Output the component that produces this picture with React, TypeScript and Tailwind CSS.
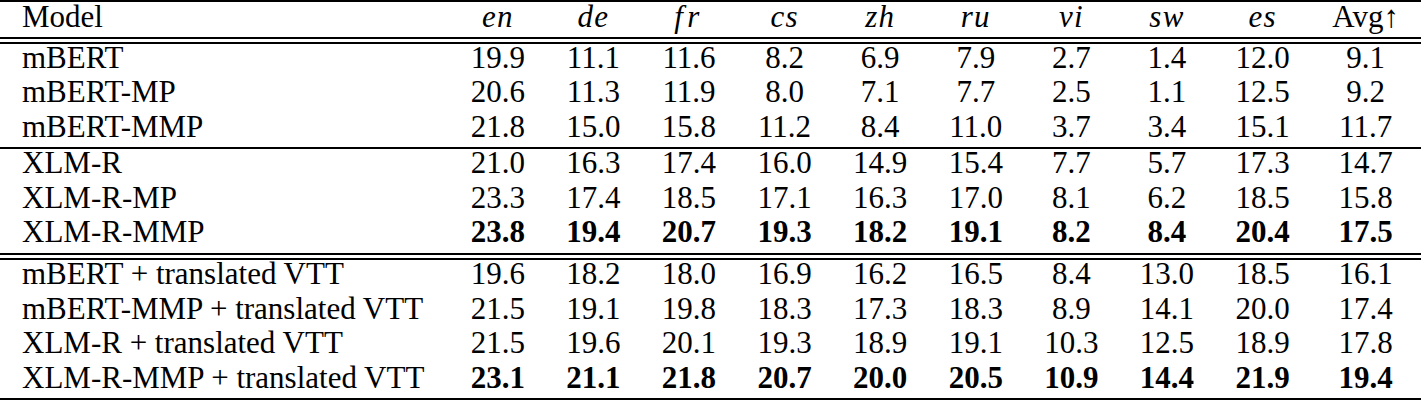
const langs = ["en", "de", "fr", "cs", "zh", "ru", "vi", "sw", "es"];

type Row = { name: string; vals: string[]; bold?: boolean };

const groups: Row[][] = [
  [
    { name: "mBERT", vals: ["19.9", "11.1", "11.6", "8.2", "6.9", "7.9", "2.7", "1.4", "12.0", "9.1"] },
    { name: "mBERT-MP", vals: ["20.6", "11.3", "11.9", "8.0", "7.1", "7.7", "2.5", "1.1", "12.5", "9.2"] },
    { name: "mBERT-MMP", vals: ["21.8", "15.0", "15.8", "11.2", "8.4", "11.0", "3.7", "3.4", "15.1", "11.7"] },
  ],
  [
    { name: "XLM-R", vals: ["21.0", "16.3", "17.4", "16.0", "14.9", "15.4", "7.7", "5.7", "17.3", "14.7"] },
    { name: "XLM-R-MP", vals: ["23.3", "17.4", "18.5", "17.1", "16.3", "17.0", "8.1", "6.2", "18.5", "15.8"] },
    { name: "XLM-R-MMP", vals: ["23.8", "19.4", "20.7", "19.3", "18.2", "19.1", "8.2", "8.4", "20.4", "17.5"], bold: true },
  ],
  [
    { name: "mBERT + translated VTT", vals: ["19.6", "18.2", "18.0", "16.9", "16.2", "16.5", "8.4", "13.0", "18.5", "16.1"] },
    { name: "mBERT-MMP + translated VTT", vals: ["21.5", "19.1", "19.8", "18.3", "17.3", "18.3", "8.9", "14.1", "20.0", "17.4"] },
    { name: "XLM-R + translated VTT", vals: ["21.5", "19.6", "20.1", "19.3", "18.9", "19.1", "10.3", "12.5", "18.9", "17.8"] },
    { name: "XLM-R-MMP + translated VTT", vals: ["23.1", "21.1", "21.8", "20.7", "20.0", "20.5", "10.9", "14.4", "21.9", "19.4"], bold: true },
  ],
];

const cols = "grid h-[34.57px] grid-cols-[450px_repeat(9,95.6px)_110.6px]";

function Rule() {
  return <div className="h-[2px] bg-black" />;
}

function DoubleRule() {
  return (
    <div className="flex flex-col gap-[3px]">
      <Rule />
      <Rule />
    </div>
  );
}

function DataRow({ row }: { row: Row }) {
  return (
    <div className={`${cols} leading-[28px]`}>
      <div className="whitespace-nowrap pl-[22px]">{row.name}</div>
      {row.vals.map((v, i) => (
        <div key={i} className={`text-center ${row.bold ? "font-bold" : ""}`}>
          {v}
        </div>
      ))}
    </div>
  );
}

export default function App() {
  return (
    <div className="h-[406px] w-[1425px] overflow-hidden bg-white font-['Liberation_Serif'] text-[31px] text-black">
      <div className="w-[1421px]">
        <Rule />
        {/* header */}
        <div className={`${cols} leading-[30.5px]`}>
          <div className="pl-[22px]">Model</div>
          {langs.map((l) => (
            <div key={l} className={`text-center italic ${l === "fr" ? "tracking-[0.14em]" : "tracking-[0.04em]"}`}>
              {l}
            </div>
          ))}
          <div className="text-center">Avg↑</div>
        </div>
        <DoubleRule />
        {groups[0].map((r) => (
          <DataRow key={r.name} row={r} />
        ))}
        <Rule />
        {groups[1].map((r) => (
          <DataRow key={r.name} row={r} />
        ))}
        <DoubleRule />
        {groups[2].map((r) => (
          <DataRow key={r.name} row={r} />
        ))}
        <Rule />
      </div>
    </div>
  );
}
